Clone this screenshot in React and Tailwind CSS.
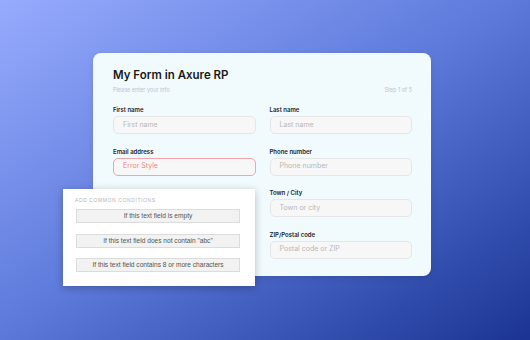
import React from "react";

const Field = ({ label, placeholder, error }) => (
  <div className="flex flex-col">
    <span className="text-[6px] leading-[8px] font-semibold text-[#1d1d1f] mb-[2px]">{label}</span>
    <div
      className={
        "h-[18px] rounded-[5px] flex items-center pl-[9px] text-[7px] " +
        (error
          ? "bg-[#f7f7f7] border border-[#f0a6a6] text-[#ef8585]"
          : "bg-[#f7f7f7] border border-[#e6e6e6] text-[#b8b8b8]")
      }
    >
      {placeholder}
    </div>
  </div>
);

const conditions = [
  "If this text field is empty",
  'If this text field does not contain "abc"',
  "If this text field contains 8 or more characters",
];

export default function App() {
  return (
    <div
      className="relative w-[530px] h-[340px] overflow-hidden bg-gradient-to-br from-[#97abfd] via-[#5c79da] to-[#1b3493] pt-[53px] pl-[93px]"
      style={{ fontFamily: "Inter, 'Open Sans', sans-serif" }}
    >
      <div className="w-[338px] h-[223px] rounded-[8px] bg-[#f1fafd] pt-[14px] pl-[20px] pr-[19px] shadow-[0_2px_6px_rgba(0,0,0,0.1)]">
        <h1 className="text-[11.5px] leading-[16px] font-semibold text-[#1a1a1a]">My Form in Axure RP</h1>
        <div className="flex justify-between mt-[3px] text-[5.5px] leading-[8px] text-[#bfc4c8]">
          <span>Please enter your info</span>
          <span>Step 1 of 5</span>
        </div>
        <div className="grid grid-cols-2 gap-x-[14px] gap-y-[13.5px] mt-[12px]">
          <Field label="First name" placeholder="First name" />
          <Field label="Last name" placeholder="Last name" />
          <Field label="Email address" placeholder="Error Style" error />
          <Field label="Phone number" placeholder="Phone number" />
          <div />
          <Field label="Town / City" placeholder="Town or city" />
          <div />
          <Field label="ZIP/Postal code" placeholder="Postal code or ZIP" />
        </div>
      </div>

      <div
        className="absolute left-[63px] top-[189px] w-[192px] h-[97px] bg-white shadow-[0_2px_8px_rgba(0,0,0,0.25)] pl-[12px] pt-[8px]"
        style={{ fontFamily: "'Liberation Sans', Arial, sans-serif" }}
      >
        <div className="text-[5px] leading-[7px] tracking-[0.6px] text-[#b5b5b5]">ADD COMMON CONDITIONS</div>
        <div className="flex flex-col gap-[10.5px] mt-[5px] ml-[1px]">
          {conditions.map((c) => (
            <div
              key={c}
              className="w-[164px] h-[14px] bg-[#f2f2f2] border border-[#dcdcdc] flex items-center justify-center text-[6.6px] text-[#555]"
            >
              {c}
            </div>
          ))}
        </div>
      </div>
    </div>
  );
}
